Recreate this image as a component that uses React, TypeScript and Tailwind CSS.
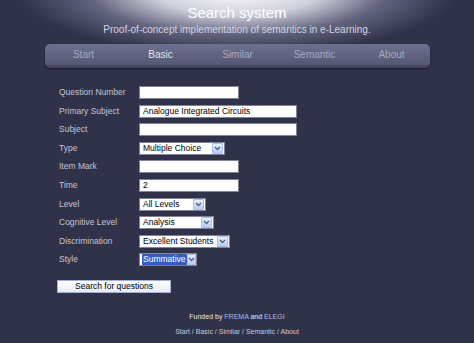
const font = { fontFamily: '"Liberation Sans", Arial, sans-serif' };

function Arrow() {
    return (
        <span className="ml-auto mr-[1px] flex h-[11px] w-[11px] items-center justify-center rounded-[1px] border border-[#a9bde6] bg-gradient-to-b from-[#e6eeff] to-[#b9cdf3]">
            <svg width="7" height="5" viewBox="0 0 7 5">
                <path d="M1 1 L3.5 3.5 L6 1" fill="none" stroke="#4d6185" strokeWidth="1.4" />
            </svg>
        </span>
    );
}

function TextBox({ w, value }: { w: string; value?: string }) {
    return (
        <div className={`${w} h-[13px] border border-[#7f8395] bg-white pl-[3px] text-[8.5px] leading-[11px] text-black`}>
            {value}
        </div>
    );
}

function Select({ w, value, picked }: { w: string; value: string; picked?: boolean }) {
    return (
        <div className={`${w} flex h-[13px] items-center border border-[#7f8395] bg-white pl-[2px] text-[8.5px] leading-[11px] text-black`}>
            <span className={picked ? 'bg-[#2f5fc4] px-[1px] text-white' : 'pl-[1px]'}>{value}</span>
            <Arrow />
        </div>
    );
}

const rows: { label: string; field: JSX.Element }[] = [
    { label: 'Question Number', field: <TextBox w="w-[100px]" /> },
    { label: 'Primary Subject', field: <TextBox w="w-[158px]" value="Analogue Integrated Circuits" /> },
    { label: 'Subject', field: <TextBox w="w-[158px]" /> },
    { label: 'Type', field: <Select w="w-[86px]" value="Multiple Choice" /> },
    { label: 'Item Mark', field: <TextBox w="w-[100px]" /> },
    { label: 'Time', field: <TextBox w="w-[100px]" value="2" /> },
    { label: 'Level', field: <Select w="w-[67px]" value="All Levels" /> },
    { label: 'Cognitive Level', field: <Select w="w-[75px]" value="Analysis" /> },
    { label: 'Discrimination', field: <Select w="w-[91px]" value="Excellent Students" /> },
    { label: 'Style', field: <Select w="w-[58px]" value="Summative" picked /> },
];

const nav = ['Start', 'Basic', 'Similar', 'Semantic', 'About'];

export default function App() {
    return (
        <div className="relative h-[343px] w-[474px] overflow-hidden bg-[#30324a]" style={font}>
            {/* soft glow behind header */}
            <div className="pointer-events-none absolute left-1/2 top-[-75px] h-[130px] w-[440px] -translate-x-1/2 bg-[radial-gradient(closest-side,rgba(255,255,255,1)_0%,rgba(235,236,245,0.85)_38%,rgba(160,162,190,0.45)_68%,rgba(48,50,74,0)_100%)]" />

            <div className="relative flex flex-col items-center pt-[4px]">
                <h1 className="text-[15px] leading-[18px] text-white">Search system</h1>
                <p className="mt-[2px] text-[10px] leading-[12px] text-[#d2d4e0]">Proof-of-concept implementation of semantics in e-Learning.</p>
            </div>

            <div className="relative mx-[45px] mt-[8px] flex h-[24px] w-[385px] rounded-[5px] border-b-[3px] border-[#45475e] bg-gradient-to-b from-[#6e7090] to-[#555874] shadow-[0_1px_2px_rgba(0,0,0,0.5)]">
                {nav.map(n => (
                    <div key={n} className={`flex flex-1 items-center justify-center text-[10px] ${n === 'Basic' ? 'text-[#e2e3ee]' : 'text-[#a7a9bf]'}`}>
                        {n}
                    </div>
                ))}
            </div>

            <div className="ml-[59px] mt-[18px] grid grid-cols-[80px_auto] gap-y-[5.6px]">
                {rows.map(r => (
                    <div key={r.label} className="contents">
                        <div className="text-[8.5px] leading-[13px] text-[#c4c6d4]">{r.label}</div>
                        {r.field}
                    </div>
                ))}
            </div>

            <div className="ml-[57px] mt-[14px] flex">
                <button className="h-[13px] w-[114px] border border-[#9fb1d8] bg-gradient-to-b from-white to-[#e8ecf4] text-[8.5px] leading-[11px] text-black">
                    Search for questions
                </button>
            </div>

            <div className="mt-[19px] flex flex-col items-center text-[7px] leading-[9px]">
                <p className="text-[#e6e7ef]">
                    Funded by <span className="text-[#a9b9f0]">FREMA</span> and <span className="text-[#a9b9f0]">ELEGI</span>
                </p>
                <p className="mt-[6px] text-[#c7c9d8]">Start / Basic / Similar / Semantic / About</p>
            </div>
        </div>
    );
}
